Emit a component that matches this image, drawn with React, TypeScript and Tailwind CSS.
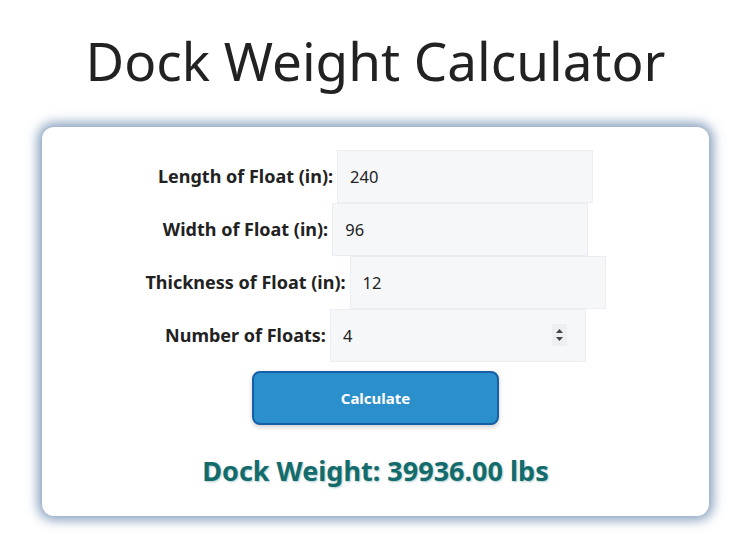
import { useState } from "react";

const font = { fontFamily: '"Noto Sans", "Open Sans", sans-serif' };

function Field({
  label,
  value,
  onChange,
  spinner,
}: {
  label: string;
  value: string;
  onChange: (v: string) => void;
  spinner?: boolean;
}) {
  return (
    <div className="flex items-center justify-center gap-1">
      <label className="text-[18px] font-bold text-[#222]">{label}</label>
      <div className="relative">
        <input
          value={value}
          onChange={(e) => onChange(e.target.value)}
          className="w-[256px] h-[53px] bg-[#f6f7f9] border border-[#eceef1] pl-3 text-[16.5px] text-[#222] outline-none"
          style={font}
        />
        {spinner && (
          <div className="absolute right-[19px] top-[15px] w-[15px] h-[22px] bg-[#eeeff1] flex flex-col items-center justify-center gap-[4px]">
            <svg width="7" height="4" viewBox="0 0 7 4">
              <path d="M0 4 L3.5 0 L7 4 Z" fill="#444" />
            </svg>
            <svg width="7" height="4" viewBox="0 0 7 4">
              <path d="M0 0 L3.5 4 L7 0 Z" fill="#444" />
            </svg>
          </div>
        )}
      </div>
    </div>
  );
}

export default function App() {
  const [length, setLength] = useState("240");
  const [width, setWidth] = useState("96");
  const [thickness, setThickness] = useState("12");
  const [count, setCount] = useState("4");
  const [weight, setWeight] = useState(39936);

  // cubic inches -> cubic feet, times water weight (62.4 lb/ft³)
  const calc = () => {
    const v = parseFloat(length) * parseFloat(width) * parseFloat(thickness) * parseFloat(count);
    setWeight(isNaN(v) ? 0 : (v / 1728) * 62.4);
  };

  return (
    <div className="min-h-[550px] bg-white flex flex-col items-center" style={font}>
      <h1 className="mt-[23px] text-[53px] leading-[76px] text-[#222] font-normal">Dock Weight Calculator</h1>
      <div className="mt-[28px] w-[667px] rounded-[12px] bg-white shadow-[0_0_12px_4px_rgba(80,115,160,0.7)] pt-[23px] pb-[24px] flex flex-col items-center">
        <div className="flex flex-col">
          <Field label="Length of Float (in):" value={length} onChange={setLength} />
          <Field label="Width of Float (in):" value={width} onChange={setWidth} />
          <Field label="Thickness of Float (in):" value={thickness} onChange={setThickness} />
          <Field label="Number of Floats:" value={count} onChange={setCount} spinner />
        </div>
        <button
          onClick={calc}
          className="mt-[9px] w-[247px] h-[54px] rounded-[8px] bg-[#2b8fcb] border-2 border-[#155fa6] text-white text-[15px] font-bold shadow-[0_2px_5px_rgba(0,0,0,0.2)]"
        >
          Calculate
        </button>
        <div className="mt-[26px] text-[27px] font-bold text-[#146b6b] [text-shadow:1px_1px_2px_rgba(20,107,107,0.35)]">
          Dock Weight: {weight.toFixed(2)} lbs
        </div>
      </div>
    </div>
  );
}
